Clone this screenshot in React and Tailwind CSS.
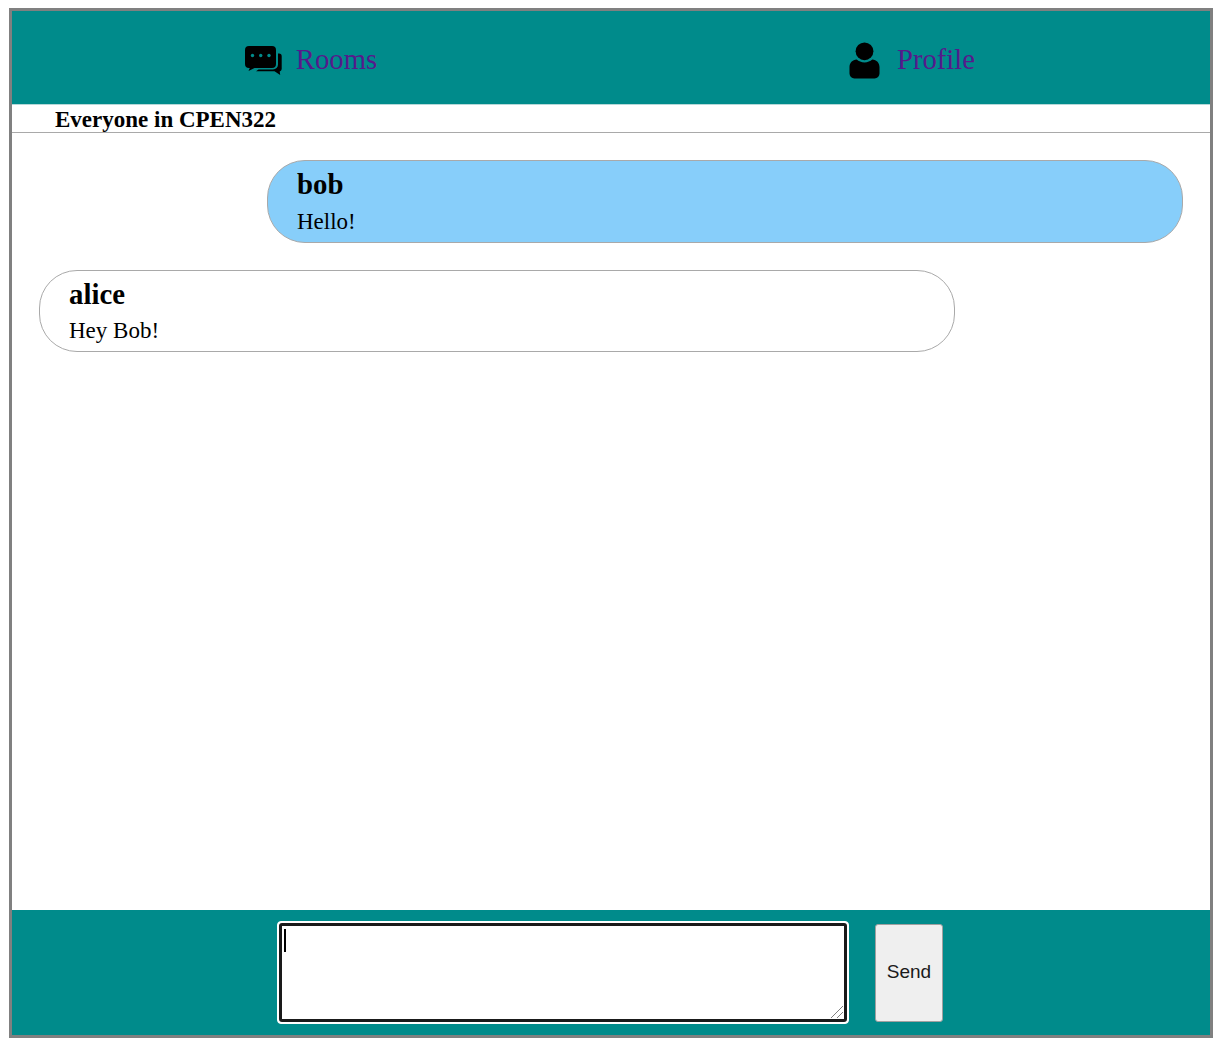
export default function App() {
  return (
    <div className="h-[1048px] w-[1223px] bg-white pl-[9px] pr-[10px] pt-2 pb-[10px] font-['Liberation_Serif',serif]">
      <div className="flex h-full flex-col border-[3px] border-[#808080]">
        <div className="flex h-[94px] shrink-0 border-b border-b-[#b5d8d8] bg-[#008b8b]">
          <div className="flex w-1/2 items-center justify-center gap-[14px] pr-[1px] pt-[3px]">
            <svg className="mt-[3px]" width="37" height="30" viewBox="0 0 37 30" fill="#000" aria-hidden="true">
              <path d="M4 0h23a4 4 0 0 1 4 4v14a4 4 0 0 1-4 4H9.500l-6 3 1.300-3H4a4 4 0 0 1-4-4V4a4 4 0 0 1 4-4z" />
              <path d="M33 7.500h1a2.700 2.700 0 0 1 2.700 2.700V23a2.700 2.700 0 0 1-2 2.500l.5 3.500-5.700-3.800H11l2.500-1.700H28a5 5 0 0 0 5-5z" />
              <circle cx="7.500" cy="9.500" r="1.700" fill="#008b8b" />
              <circle cx="15.700" cy="9.500" r="1.700" fill="#008b8b" />
              <circle cx="24" cy="9.500" r="1.700" fill="#008b8b" />
            </svg>
            <a className="text-[28.700px] leading-none text-[#551a8b]">Rooms</a>
          </div>
          <div className="flex w-1/2 items-center justify-center gap-[17px] pl-[3px] pt-[3px]">
            <svg className="mt-[3px]" width="31" height="37" viewBox="0 0 32 37" fill="#000" aria-hidden="true">
              <circle cx="16" cy="9" r="9.200" />
              <path d="M8 17.500c2 1.800 4.800 3 8 3s6-1.200 8-3c4.500.3 7.500 3.500 7.500 8V32a5 5 0 0 1-5 5h-21a5 5 0 0 1-5-5v-6.500c0-4.500 3-7.700 7.500-8z" />
            </svg>
            <a className="text-[28.700px] leading-none text-[#551a8b]">Profile</a>
          </div>
        </div>
        <div className="h-[28px] shrink-0 border-b border-b-[#a9a9a9] pl-[43px] text-[23px] font-bold leading-[29px] text-black">
          Everyone in CPEN322
        </div>
        <div className="flex flex-1 flex-col gap-[27px] pl-[27px] pt-[27px]">
          <div className="ml-[228px] h-[83px] w-[916px] rounded-[38px] border border-[#a9a9a9] bg-[#87cefa] pl-[29px] pt-[8px] text-black">
            <div className="text-[28.800px] font-bold leading-[30px]">bob</div>
            <div className="mt-[9px] text-[23px] leading-[28px]">Hello!</div>
          </div>
          <div className="h-[82px] w-[916px] rounded-[38px] border border-[#a9a9a9] bg-white pl-[29px] pt-[8px] text-black">
            <div className="text-[28.800px] font-bold leading-[30px]">alice</div>
            <div className="mt-[8px] text-[23px] leading-[28px]">Hey Bob!</div>
          </div>
        </div>
        <div className="flex h-[125px] shrink-0 items-center bg-[#008b8b] pl-[265px]">
          <div className="relative h-[103px] w-[572px] rounded-[4px] border border-white bg-white p-[1px]">
            <div className="relative h-full w-full rounded-[3px] border-[3px] border-[#1a1a1a] bg-white">
              <span className="absolute left-[2px] top-[3px] h-[23px] w-[2px] bg-black" />
              <svg className="absolute bottom-0 right-0" width="14" height="14" viewBox="0 0 14 14" fill="none" stroke="#808080" strokeWidth="1" aria-hidden="true">
                <path d="M1 13 13 1M7 13l6-6" />
              </svg>
            </div>
          </div>
          <button className="ml-[26px] h-[98px] w-[68px] rounded-[3px] border border-[#a0a0a0] bg-[#efefef] font-['Liberation_Sans',sans-serif] text-[19px] text-[#1a1a1a]">
            Send
          </button>
        </div>
      </div>
    </div>
  );
}
